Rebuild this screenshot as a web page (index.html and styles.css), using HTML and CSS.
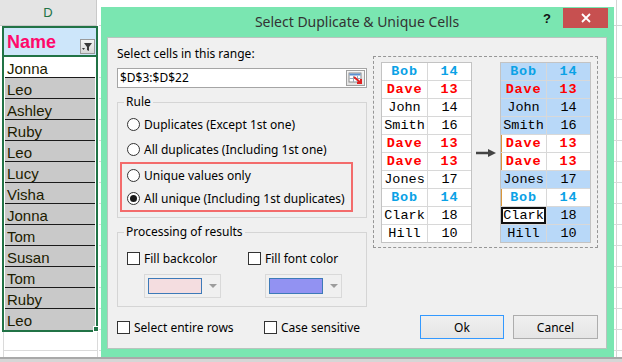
FILE: index.html
```html
<!DOCTYPE html>
<html>
<head>
<meta charset="utf-8">
<link rel="stylesheet" href="styles.css">
</head>
<body>
<div class="sheet">
  <div class="col-d">
    <div class="col-head">D</div>
    <div class="sel">
      <div class="name-cell">
        <span class="name">Name</span>
        <span class="filter"><svg width="13" height="13" viewBox="0 0 13 13"><polygon points="3,3 11,3 8,7 8,11 6,10 6,7" fill="#3a3a3a"/><polygon points="1,8 4,8 2.5,10" fill="#3a3a3a"/></svg></span>
      </div>
      <div class="data">
        <div class="cell white">Jonna</div>
        <div class="cell">Leo</div>
        <div class="cell">Ashley</div>
        <div class="cell">Ruby</div>
        <div class="cell">Leo</div>
        <div class="cell">Lucy</div>
        <div class="cell">Visha</div>
        <div class="cell">Jonna</div>
        <div class="cell">Tom</div>
        <div class="cell">Susan</div>
        <div class="cell">Tom</div>
        <div class="cell">Ruby</div>
        <div class="cell last">Leo</div>
      </div>
      <span class="handle"></span>
    </div>
    <div class="below"></div>
  </div>
  <div class="col-rest">
    <div class="rest-head"></div>
    <div class="rest-body"></div>
  </div>
</div>
<div class="floor"></div>

<div class="dialog">
  <div class="titlebar">
    <span></span>
    <span class="title">Select Duplicate &amp; Unique Cells</span>
    <div class="controls">
      <span class="help">?</span>
      <span class="close"><svg width="10" height="10" viewBox="0 0 10 10"><path d="M1 1 L9 9 M9 1 L1 9" stroke="#fff" stroke-width="1.8"/></svg></span>
    </div>
  </div>
  <div class="content">
    <div class="main">
      <div class="left">
        <div class="label">Select cells in this range:</div>
        <div class="range">
          <span class="range-text">$D$3:$D$22</span>
          <span class="pick"><svg width="15" height="12" viewBox="0 0 15 12"><rect x="1" y="1" width="12" height="9" fill="#fff" stroke="#8a8a8a" stroke-width="1"/><rect x="1.5" y="1.5" width="11" height="2" fill="#5b8fd0"/><path d="M1.5 6.5 H12.5 M5.5 4 V10 M9.5 4 V10" stroke="#9ab" stroke-width="1"/><path d="M6 5 L13 11 M13 7 V11 H9" stroke="#e02020" stroke-width="2" fill="none"/></svg></span>
        </div>
        <fieldset class="group rule">
          <legend>Rule</legend>
          <div class="opt"><span class="radio"></span>Duplicates (Except 1st one)</div>
          <div class="opt"><span class="radio"></span>All duplicates (Including 1st one)</div>
          <div class="hl">
            <div class="opt"><span class="radio"></span>Unique values only</div>
            <div class="opt"><span class="radio on"></span>All unique (Including 1st duplicates)</div>
          </div>
        </fieldset>
        <fieldset class="group proc">
          <legend>Processing of results</legend>
          <div class="checks">
            <div class="chk-item first"><span class="check"></span>Fill backcolor</div>
            <div class="chk-item"><span class="check"></span>Fill font color</div>
          </div>
          <div class="drops">
            <div class="drop"><span class="swatch pink"></span><span class="caret"></span></div>
            <div class="drop"><span class="swatch violet"></span><span class="caret"></span></div>
          </div>
        </fieldset>
      </div>
      <div class="preview">
        <div class="tbl">
          <div class="c b">Bob</div><div class="c b">14</div>
          <div class="c d">Dave</div><div class="c d">13</div>
          <div class="c">John</div><div class="c">14</div>
          <div class="c">Smith</div><div class="c">16</div>
          <div class="c d">Dave</div><div class="c d">13</div>
          <div class="c d">Dave</div><div class="c d">13</div>
          <div class="c">Jones</div><div class="c">17</div>
          <div class="c b">Bob</div><div class="c b">14</div>
          <div class="c">Clark</div><div class="c">18</div>
          <div class="c">Hill</div><div class="c">10</div>
        </div>
        <svg class="arrow" width="20" height="10" viewBox="0 0 20 10"><path d="M0 5 H14" stroke="#444" stroke-width="2.5"/><polygon points="12,1 20,5 12,9" fill="#444"/></svg>
        <div class="tbl res">
          <div class="c b">Bob</div><div class="c b">14</div>
          <div class="c d">Dave</div><div class="c d">13</div>
          <div class="c">John</div><div class="c">14</div>
          <div class="c">Smith</div><div class="c">16</div>
          <div class="c d w mark">Dave</div><div class="c d w">13</div>
          <div class="c d w mark">Dave</div><div class="c d w">13</div>
          <div class="c">Jones</div><div class="c">17</div>
          <div class="c b w mark">Bob</div><div class="c b w">14</div>
          <div class="c w act">Clark</div><div class="c">18</div>
          <div class="c">Hill</div><div class="c">10</div>
        </div>
      </div>
    </div>
    <div class="actions">
      <div class="chk-item wide"><span class="check"></span>Select entire rows</div>
      <div class="chk-item"><span class="check"></span>Case sensitive</div>
      <button class="btn ok">Ok</button>
      <button class="btn cancel">Cancel</button>
    </div>
  </div>
</div>
</body>
</html>
```

FILE: styles.css
```css
* { box-sizing: border-box; }

body {
  margin: 0;
  width: 622px;
  height: 362px;
  overflow: hidden;
  background: #fff;
  position: relative;
  font-family: "Liberation Sans", Arial, sans-serif;
}

/* ---------- spreadsheet ---------- */
.sheet { display: flex; height: 357px; }

.col-d { width: 99px; flex: none; display: flex; flex-direction: column; }

.col-head {
  height: 26px;
  width: 97px;
  background: #e4e4e4;
  border-bottom: 1px solid #c9c9c9;
  border-right: 1px solid #c9c9c9;
  color: #217346;
  font-size: 13px;
  display: flex;
  align-items: center;
  justify-content: center;
}

.sel {
  margin-left: 2px;
  width: 96px;
  border: 2px solid #217346;
  position: relative;
}

.name-cell {
  height: 29px;
  background: #cde6fa;
  border-bottom: 2px solid #217346;
  display: flex;
  align-items: flex-end;
  justify-content: space-between;
  padding: 0 1px 3px 3px;
}

.name {
  color: #ff0a6c;
  font-weight: bold;
  font-size: 18px;
  line-height: 20px;
}

.filter {
  width: 15px;
  height: 15px;
  margin-bottom: -2px;
  border: 1px solid #9a9a9a;
  background: linear-gradient(#f4f4f4, #d8d8d8);
  display: flex;
  align-items: center;
  justify-content: center;
}

.data { padding: 0 1px; }

.cell {
  height: 21px;
  background: #c9c9c9;
  border-bottom: 1px solid #1a1a1a;
  font-size: 15px;
  line-height: 19px;
  padding: 2px 0 0 2px;
  color: #1c1c00;
}
.cell.white { background: #fff; }
.cell.last { border-bottom: 0; }

.handle {
  position: absolute;
  right: -3px;
  bottom: -2px;
  width: 6px;
  height: 6px;
  background: #217346;
  border: 1px solid #fff;
}

.below {
  flex: 1;
  margin-left: 3px;
  width: 95px;
  border-left: 1px solid #dadada;
  border-right: 1px solid #dadada;
  background: repeating-linear-gradient(to bottom, transparent 0 18px, #dadada 18px 19px);
}

.col-rest {
  flex: 1;
  display: flex;
  flex-direction: column;
  background: linear-gradient(to right, transparent 517px, #d4d4d4 517px 518px, transparent 518px);
}
.rest-head { height: 26px; border-bottom: 1px solid #d4d4d4; }
.rest-body {
  flex: 1;
  margin-top: 31px;
  background: repeating-linear-gradient(to bottom, transparent 0 20px, #dadada 20px 21px);
}

.floor {
  height: 5px;
  background: #d6d6d6;
  border-top: 2px solid #a9a9a9;
}

/* ---------- dialog ---------- */
.dialog {
  position: absolute;
  left: 101px;
  top: 7px;
  width: 513px;
  height: 350px;
  background: #7ae6b1;
  padding: 0 7px 8px 6px;
  display: flex;
  flex-direction: column;
  font-family: "Noto Sans", "Open Sans", sans-serif;
  font-size: 12px;
  color: #000;
}

.titlebar {
  height: 30px;
  flex: none;
  display: grid;
  grid-template-columns: 1fr auto 1fr;
  align-items: start;
}

.title {
  font-size: 14px;
  color: #333;
  line-height: 30px;
  white-space: nowrap;
}

.controls {
  display: flex;
  justify-content: flex-end;
  align-items: flex-start;
  margin-right: -1px;
}

.help {
  font-family: "Liberation Sans", Arial, sans-serif;
  font-weight: bold;
  font-size: 13px;
  line-height: 24px;
  color: #111;
  margin-right: 12px;
}

.close {
  width: 45px;
  height: 20px;
  margin-top: 1px;
  background: #c75050;
  display: flex;
  align-items: center;
  justify-content: center;
}

.content {
  flex: 1;
  background: #f0f0f0;
  border: 1px solid #b8c4be;
  padding: 8px 8px 0 9px;
  display: flex;
  flex-direction: column;
}

.main { display: flex; align-items: flex-start; }

.left { width: 250px; flex: none; display: flex; flex-direction: column; }

.label { height: 16px; line-height: 16px; margin-bottom: 6px; white-space: nowrap; }

.range {
  height: 20px;
  border: 1px solid #a5a5a5;
  background: #fff;
  display: flex;
  align-items: center;
  justify-content: space-between;
  padding: 0 1px 0 2px;
}
.range-text { line-height: 18px; }

.pick {
  width: 19px;
  height: 16px;
  border: 1px solid #a0a0a0;
  background: linear-gradient(#f6f6f6, #e2e2e2);
  display: flex;
  align-items: center;
  justify-content: center;
}

fieldset.group {
  margin: 6px 0 0;
  padding: 0;
  border: 1px solid #d5d5d5;
  min-width: 0;
}

legend {
  padding: 0 2px;
  margin-left: 6px;
  line-height: 16px;
}

.rule { padding: 2px 0 5px !important; }

.opt {
  height: 25px;
  display: flex;
  align-items: center;
  padding-left: 9px;
  white-space: nowrap;
}

.radio {
  width: 13px;
  height: 13px;
  border: 1px solid #333;
  border-radius: 50%;
  background: #fff;
  margin-right: 4px;
  flex: none;
  display: flex;
  align-items: center;
  justify-content: center;
}
.radio.on::after {
  content: "";
  width: 7px;
  height: 7px;
  border-radius: 50%;
  background: #1a1a1a;
}

.hl {
  margin: 0 13px 0 2px;
  border: 2px solid #f36b6b;
}
.hl .opt { height: 23px; padding-left: 5px; }

.proc { padding: 8px 0 8px !important; }

.checks {
  display: flex;
  height: 20px;
  align-items: center;
  padding-left: 9px;
}

.chk-item { display: flex; align-items: center; white-space: nowrap; }
.checks .first { width: 121px; }

.check {
  width: 13px;
  height: 13px;
  border: 1px solid #333;
  background: #fff;
  margin-right: 4px;
  flex: none;
}

.drops {
  display: flex;
  gap: 44px;
  padding-left: 26px;
  margin-top: 6px;
}

.drop {
  width: 77px;
  height: 24px;
  border: 1px solid #d9d9d9;
  display: flex;
  align-items: center;
  padding-left: 3px;
}

.swatch {
  width: 54px;
  height: 16px;
  border: 1px solid #3d7ab8;
}
.swatch.pink { background: #f4dde0; }
.swatch.violet { background: #9292f2; }

.caret {
  width: 0;
  height: 0;
  border-left: 4px solid transparent;
  border-right: 4px solid transparent;
  border-top: 4px solid #9c9c9c;
  margin-left: 7px;
}

/* preview */
.preview {
  width: 225px;
  height: 192px;
  margin: 10px 0 0 6px;
  border: 1px dashed #969696;
  display: flex;
  align-items: flex-start;
  padding: 5px 0 0 7px;
}

.arrow { margin: 86px 4px 0; flex: none; }

.tbl {
  display: grid;
  grid-template-columns: 45px 43px;
  grid-auto-rows: 17px;
  gap: 1px;
  background: #d8d8d8;
  border: 1px solid #c3c3c3;
}

.c {
  background: #fff;
  text-align: center;
  line-height: 17px;
  font-family: "Liberation Mono", "DejaVu Sans Mono", monospace;
  font-size: 13.5px;
  color: #000;
  white-space: nowrap;
}
.c.b { color: #0aa2e6; font-weight: bold; letter-spacing: 0.8px; }
.c.d { color: #ff0000; font-weight: bold; letter-spacing: 0.8px; }

.res .c { background: #b8d8f8; }
.res .c.w { background: #fff; }
.c.mark { box-shadow: inset 1px 0 0 #d9963a; }
.c.act { box-shadow: inset 0 0 0 2px #111; }

/* actions */
.actions {
  display: flex;
  align-items: center;
  height: 24px;
  margin-top: 8px;
}
.actions .wide { width: 147px; }

.btn {
  width: 84px;
  height: 24px;
  border: 1px solid #adadad;
  background: linear-gradient(#f0f0f0, #e5e5e5);
  font: inherit;
  color: #000;
  padding: 0;
}
.btn.ok { margin-left: auto; border-color: #3399ff; }
.btn.cancel { margin-left: 9px; width: 85px; }
```
